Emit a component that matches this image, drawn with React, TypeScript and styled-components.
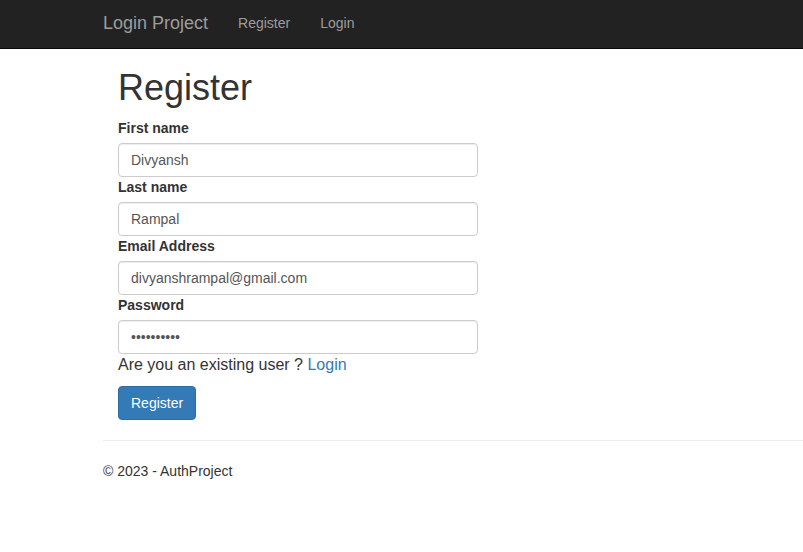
import React from 'react';
import styled, { createGlobalStyle } from 'styled-components';

const GlobalStyle = createGlobalStyle`
  * {
    box-sizing: border-box;
  }
  html, body {
    margin: 0;
    padding: 0;
    background: #fff;
  }
  body {
    font-family: "Helvetica Neue", Helvetica, "Liberation Sans", Arial, sans-serif;
    font-size: 14px;
    line-height: 1.42857143;
    color: #333;
  }
`;

const Navbar = styled.nav`
  height: 49px;
  background: #222;
  border-bottom: 1px solid #080808;
`;

const NavContainer = styled.div`
  display: flex;
  align-items: center;
  height: 48px;
  padding: 0 0 2px 88px;
`;

const Brand = styled.a`
  padding: 0 15px;
  font-size: 18px;
  line-height: 20px;
  color: #9d9d9d;
  text-decoration: none;
`;

const NavLink = styled.a`
  padding: 0 15px;
  font-size: 14px;
  line-height: 20px;
  color: #9d9d9d;
  text-decoration: none;
`;

const BodyContent = styled.main`
  padding-left: 103px;
`;

const FormSection = styled.div`
  padding-left: 15px;
`;

const Title = styled.h1`
  margin: 19px 0 10px;
  font-size: 36px;
  font-weight: 500;
  line-height: 1.1;
  color: #333;
`;

const Form = styled.form`
  display: flex;
  flex-direction: column;
  align-items: flex-start;
`;

const Label = styled.label`
  display: block;
  margin-bottom: 5px;
  font-weight: 700;
  line-height: 20px;
`;

const Input = styled.input`
  display: block;
  width: 360px;
  height: 34px;
  padding: 6px 12px;
  font-family: inherit;
  font-size: 14px;
  line-height: 1.42857143;
  color: #555;
  background: #fff;
  border: 1px solid #ccc;
  border-radius: 4px;
  box-shadow: inset 0 1px 1px rgba(0, 0, 0, 0.075);
  outline: none;
`;

const Prompt = styled.p`
  margin: 0 0 11px;
  padding-top: 1px;
  font-size: 16px;
  line-height: 20px;
`;

const PromptLink = styled.a`
  color: #337ab7;
  text-decoration: none;
`;

const Button = styled.button`
  height: 34px;
  padding: 6px 12px;
  font-family: inherit;
  font-size: 14px;
  line-height: 1.42857143;
  color: #fff;
  background: #337ab7;
  border: 1px solid #2e6da4;
  border-radius: 4px;
  cursor: pointer;
`;

const Rule = styled.hr`
  margin: 20px 0;
  border: 0;
  border-top: 1px solid #eee;
`;

const Footer = styled.footer`
  p {
    margin: 0;
    line-height: 20px;
  }
`;

const FIELDS = [
  { id: 'first', label: 'First name', type: 'text', value: 'Divyansh' },
  { id: 'last', label: 'Last name', type: 'text', value: 'Rampal' },
  { id: 'email', label: 'Email Address', type: 'email', value: 'divyanshrampal@gmail.com' },
  { id: 'password', label: 'Password', type: 'password', value: 'abcdefghij' },
];

const App = (): React.ReactElement => {
  return (
    <>
      <GlobalStyle />
      <Navbar>
        <NavContainer>
          <Brand href="#">Login Project</Brand>
          <NavLink href="#">Register</NavLink>
          <NavLink href="#">Login</NavLink>
        </NavContainer>
      </Navbar>
      <BodyContent>
        <FormSection>
          <Title>Register</Title>
          <Form
            onSubmit={(e) => {
              e.preventDefault();
            }}
          >
            {FIELDS.map((f) => {
              return (
                <React.Fragment key={f.id}>
                  <Label htmlFor={f.id}>{f.label}</Label>
                  <Input id={f.id} type={f.type} defaultValue={f.value} />
                </React.Fragment>
              );
            })}
            <Prompt>
              Are you an existing user ? <PromptLink href="#">Login</PromptLink>
            </Prompt>
            <Button type="submit">Register</Button>
          </Form>
        </FormSection>
        <Rule />
        <Footer>
          <p>© 2023 - AuthProject</p>
        </Footer>
      </BodyContent>
    </>
  );
};

export default App;
